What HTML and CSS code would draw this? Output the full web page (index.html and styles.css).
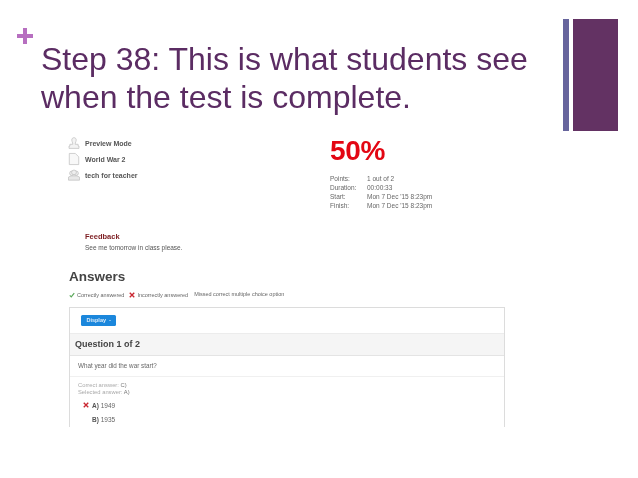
FILE: index.html
```html
<!DOCTYPE html>
<html lang="en">
<head>
<meta charset="utf-8">
<title>Step 38</title>
<link rel="stylesheet" href="styles.css">
</head>
<body>
<main class="slide">
  <header class="head">
    <span class="plus"><svg width="16" height="16" viewBox="0 0 16 16"><path d="M6 0h4v6h6v4h-6v6H6v-6H0V6h6z" fill="#b76fc0"/></svg></span>
    <h1 class="title">Step 38: This is what students see<br>when the test is complete.</h1>
    <div class="bars"><span class="bar-thin"></span><span class="bar-wide"></span></div>
  </header>

  <section class="shot">
    <div class="top">
      <ul class="meta">
        <li><svg class="meta-icon" viewBox="0 0 14 14"><path d="M7 .8c1.700 0 2.600 1.200 2.600 2.800 0 1.400-.8 2.300-1 3.400l-.2 1.500h3.400v2h1v2.800H1.200V10.500h1v-2h3.400L5.400 7c-.2-1.100-1-2-1-3.400C4.400 2 5.300.8 7 .8z" fill="#f3f3f3" stroke="#bbb" stroke-width=".8"/></svg>Preview Mode</li>
        <li><svg class="meta-icon" viewBox="0 0 14 14"><path d="M1.500 .5h7l4 4v9h-11z" fill="#f8f8f8" stroke="#bbb" stroke-width=".8"/></svg>World War 2</li>
        <li><svg class="meta-icon" viewBox="0 0 14 14"><circle cx="4.500" cy="5" r="2.600" fill="#eee" stroke="#bbb" stroke-width=".8"/><circle cx="9.500" cy="5" r="2.600" fill="#eee" stroke="#bbb" stroke-width=".8"/><circle cx="7" cy="4" r="2.800" fill="#eee" stroke="#bbb" stroke-width=".8"/><path d="M.5 13V9.500l3-1.500h7l3 1.500V13z" fill="#e8e8e8" stroke="#bbb" stroke-width=".8"/></svg>tech for teacher</li>
      </ul>
      <div class="result">
        <div class="score">50%</div>
        <dl class="stats">
          <dt>Points:</dt><dd>1 out of 2</dd>
          <dt>Duration:</dt><dd>00:00:33</dd>
          <dt>Start:</dt><dd>Mon 7 Dec '15 8:23pm</dd>
          <dt>Finish:</dt><dd>Mon 7 Dec '15 8:23pm</dd>
        </dl>
      </div>
    </div>

    <div class="feedback">
      <h2 class="feedback-title">Feedback</h2>
      <p class="feedback-text">See me tomorrow in class please.</p>
    </div>

    <h2 class="answers">Answers</h2>
    <div class="legend">
      <span class="legend-item"><svg class="mark" viewBox="0 0 8 8"><path d="M1 4.500l2 2L7 1.500" fill="none" stroke="#5aa85a" stroke-width="1.600"/></svg>Correctly answered</span>
      <span class="legend-item"><svg class="mark" viewBox="0 0 8 8"><path d="M1 1l6 6M7 1L1 7" fill="none" stroke="#c9252f" stroke-width="1.800"/></svg>Incorrectly answered</span>
      <span class="legend-item legend-raised">Missed correct multiple choice option</span>
    </div>

    <div class="card">
      <div class="toolbar"><button class="display">Display <span class="caret"></span></button></div>
      <h3 class="q-head">Question 1 of 2</h3>
      <p class="q-text">What year did the war start?</p>
      <div class="key">
        <div>Correct answer: <b>C)</b></div>
        <div>Selected answer: <b>A)</b></div>
      </div>
      <div class="option"><svg class="mark" viewBox="0 0 8 8"><path d="M1 1l6 6M7 1L1 7" fill="none" stroke="#c9252f" stroke-width="1.800"/></svg><span><b>A)</b> 1949</span></div>
      <div class="option option-b"><span><b>B)</b> 1935</span></div>
    </div>
  </section>
</main>
</body>
</html>
```
FILE: styles.css
```css
* { box-sizing: border-box; }
html, body { margin: 0; padding: 0; background: #fff; }
body { font-family: "Liberation Sans", Arial, sans-serif; }
.slide { width: 638px; height: 478px; padding-top: 19px; overflow: hidden; }

.head { display: flex; height: 112px; padding-left: 17px; }
.plus { width: 24px; padding-top: 9px; flex: none; line-height: 0; }
.title {
  margin: 21px 0 0;
  width: 522px;
  flex: none;
  font-size: 32px;
  line-height: 38px;
  font-weight: 400;
  color: #5b2c63;
  white-space: nowrap;
  filter: blur(.3px);
}
.bars { display: flex; gap: 4px; flex: none; }
.bar-thin { width: 6px; background: #67659d; }
.bar-wide { width: 45px; background: #633263; }

.shot { padding: 4px 0 0 68px; filter: blur(.35px); }
.top { display: flex; height: 91px; }
.meta { list-style: none; margin: 0; padding: 0; width: 262px; flex: none; }
.meta li {
  display: flex; align-items: center; gap: 5px;
  height: 16px;
  font-size: 7px; font-weight: 700; color: #555;
}
.meta-icon { width: 12px; height: 14px; flex: none; }

.result { padding-top: 1px; }
.score { font-size: 28px; line-height: 30px; font-weight: 700; color: #e30613; letter-spacing: -.3px; }
.stats {
  display: grid; grid-template-columns: 37px auto;
  margin: 8px 0 0;
  font-size: 6.500px; line-height: 9px; color: #666;
}
.stats dd { margin: 0; }

.feedback { padding: 5px 0 0 17px; }
.feedback-title { margin: 0; font-size: 7.500px; line-height: 11px; font-weight: 700; color: #7c1c20; }
.feedback-text { margin: 1px 0 0; font-size: 6.500px; line-height: 10px; color: #555; }

.answers { margin: 15px 0 0 1px; font-size: 13.500px; line-height: 18px; font-weight: 700; color: #444; }
.legend { display: flex; gap: 5px; margin: 3px 0 0 1px; height: 12px; font-size: 5.500px; line-height: 10px; color: #666; align-items: center; }
.legend-item { display: flex; align-items: center; gap: 2px; }
.legend-raised { margin-left: 1px; margin-top: -2px; }
.mark { width: 6px; height: 6px; flex: none; }

.card {
  margin: 6px 0 0 1px;
  width: 436px;
  height: 120px;
  border: 1px solid #dcdcdc;
  border-bottom: 0;
  font-size: 6.500px;
  color: #666;
}
.toolbar { height: 25px; padding: 7px 0 0 11px; }
.display {
  display: block; width: 35px; height: 11px; padding: 0; border: 0; border-radius: 1.500px;
  background: #1b87dc; color: #dcecfa;
  font: 700 5.500px/11px "Liberation Sans", Arial, sans-serif;
}
.caret {
  display: inline-block; margin-left: 1px; vertical-align: middle;
  border: 1.500px solid transparent; border-top-color: #dcecfa; border-bottom: 0;
}
.q-head {
  margin: 0; height: 23px; padding-left: 5px;
  background: #f5f5f5;
  border-top: 1px solid #ececec; border-bottom: 1px solid #e4e4e4;
  font-size: 9px; line-height: 21px; font-weight: 700; color: #444;
}
.q-text { margin: 0; height: 21px; padding: 5px 0 0 8px; font-size: 6.300px; line-height: 9px; border-bottom: 1px solid #f0f0f0; }
.key { padding: 5px 0 0 8px; line-height: 7px; color: #aaa; font-size: 5.800px; }
.key b { color: #777; font-weight: 400; }
.option { display: flex; align-items: center; gap: 3px; height: 14px; padding-left: 13px; }
.key + .option { margin-top: 2px; }
.option b { color: #555; }
.option-b { padding-left: 22px; }
```
